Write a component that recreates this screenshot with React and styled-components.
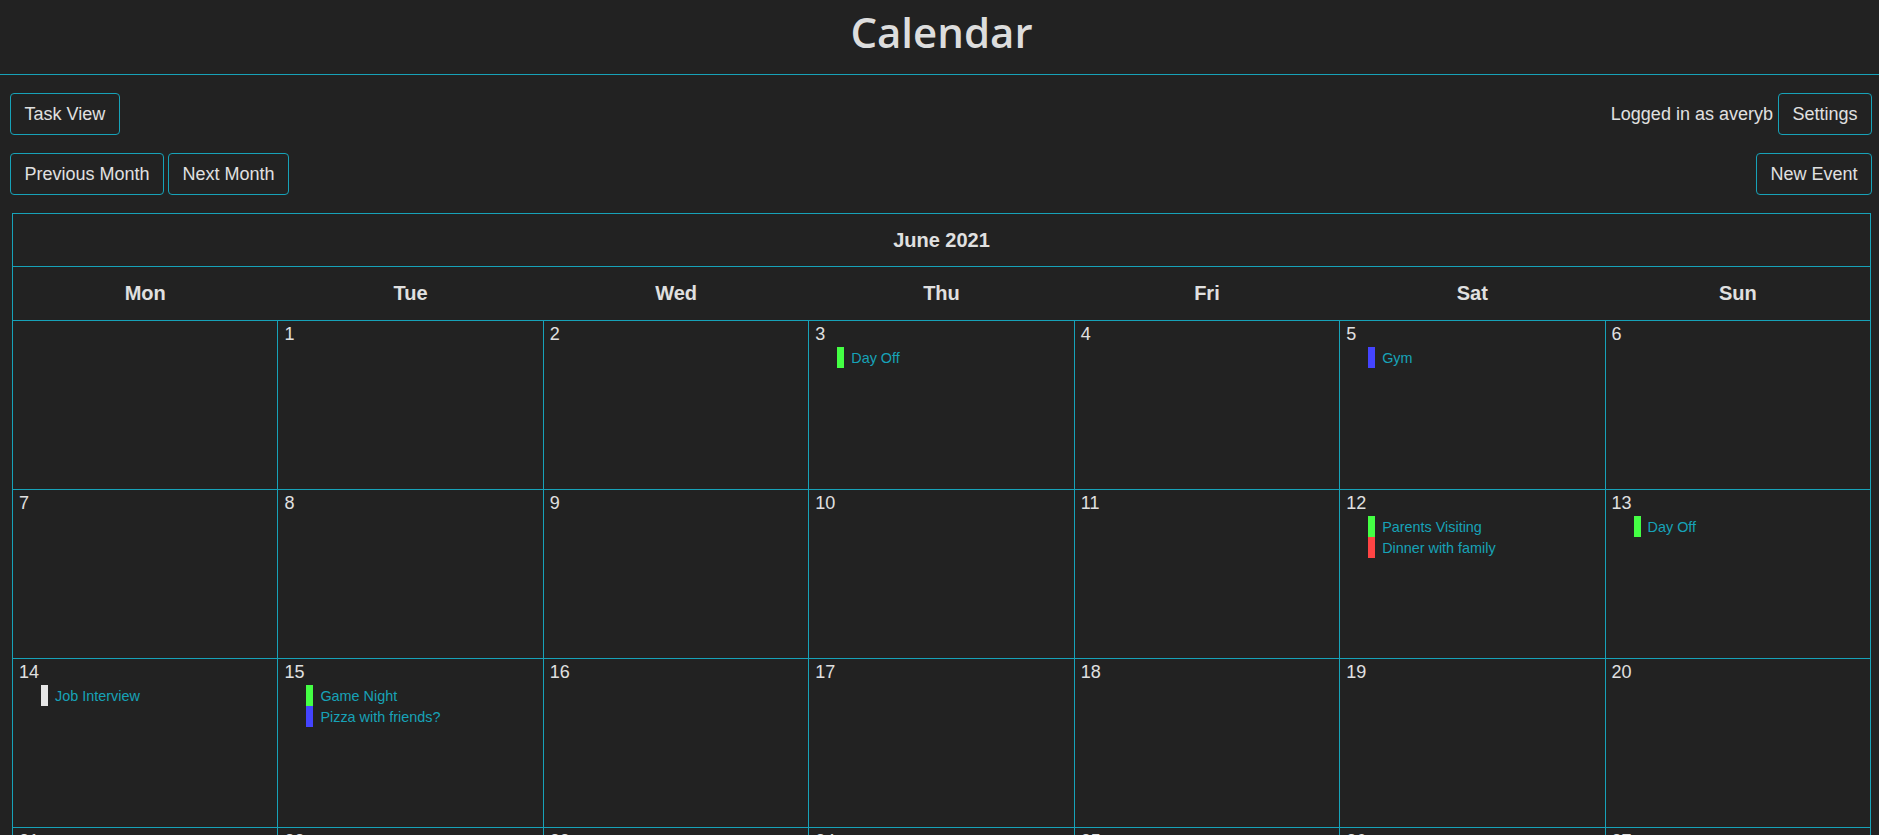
import React from 'react';
import styled, { createGlobalStyle } from 'styled-components';

const GlobalStyle = createGlobalStyle`
    body {
        margin: 0;
        background: #222222;
        color: #e0e0e0;
        font-family: "Liberation Sans", Arial, sans-serif;
        font-size: 18px;
    }
`

const Header = styled.header`
    border-bottom: 1px solid #17a2b8;
    height: 75px;
    box-sizing: border-box;
    text-align: center;
`

const Title = styled.h1`
    margin: 0;
    padding-left: 4px;
    font-family: "Open Sans", "Noto Sans", sans-serif;
    font-weight: 600;
    font-size: 42px;
    line-height: 64px;
    color: #dddddd;
`

const Page = styled.main`
    padding: 18px 7px 0 10px;
`

const Toolbar = styled.div`
    display: flex;
    justify-content: space-between;
    align-items: center;
    margin-bottom: 18px;
`

const Group = styled.div`
    display: flex;
    align-items: center;
    gap: ${props => props.gap || 4}px;
`

const Button = styled.button`
    font-family: inherit;
    font-size: 18px;
    line-height: 20px;
    padding: 10px 13.5px;
    color: #e0e0e0;
    background: transparent;
    border: 1px solid #17a2b8;
    border-radius: 4px;
    cursor: pointer;
`

const UserLabel = styled.span`
    font-size: 18px;
    color: #e0e0e0;
`

const Calendar = styled.section`
    margin: 0 1px 0 2px;
    border: 1px solid #17a2b8;
`

const MonthTitle = styled.div`
    padding: 15px;
    line-height: 22px;
    font-size: 20px;
    font-weight: bold;
    text-align: center;
    border-bottom: 1px solid #17a2b8;
`

const Grid = styled.div`
    display: grid;
    grid-template-columns: repeat(7, 1fr);
    gap: 1px;
    background: ${props => props.lined ? '#17a2b8' : '#222222'};
    border-top: ${props => props.lined ? '1px solid #17a2b8' : 'none'};
    grid-auto-rows: ${props => props.lined ? '168px' : 'auto'};
`

const DayName = styled.div`
    padding: 15px 0 16px;
    line-height: 22px;
    font-size: 20px;
    font-weight: bold;
    text-align: center;
    background: #222222;
`

const Cell = styled.div`
    background: #222222;
    padding: 3px 6px;
    min-width: 0;
`

const DateNum = styled.div`
    font-size: 18px;
    line-height: 21px;
    color: #e0e0e0;
`

const EventList = styled.ul`
    list-style: none;
    margin: 2px 0 0;
    padding-left: 22px;
`

const EventItem = styled.li`
    display: flex;
    align-items: center;
    gap: 7px;
    height: 21px;
    font-size: 14.4px;
    color: #17a2b8;
`

const Bar = styled.span`
    width: 7px;
    height: 21px;
    background: ${props => props.color};
    flex-shrink: 0;
`

const colors = {
    green: '#44ff44',
    blue: '#4444ff',
    red: '#ff4444',
    white: '#e6e6e6',
}

const events = {
    3: [{ name: 'Day Off', color: 'green' }],
    5: [{ name: 'Gym', color: 'blue' }],
    12: [
        { name: 'Parents Visiting', color: 'green' },
        { name: 'Dinner with family', color: 'red' },
    ],
    13: [{ name: 'Day Off', color: 'green' }],
    14: [{ name: 'Job Interview', color: 'white' }],
    15: [
        { name: 'Game Night', color: 'green' },
        { name: 'Pizza with friends?', color: 'blue' },
    ],
}

const dayNames = ['Mon', 'Tue', 'Wed', 'Thu', 'Fri', 'Sat', 'Sun']

// June 2021 starts on a Tuesday
const cells = [null]
for (let d = 1; d <= 30; d++) cells.push(d)
while (cells.length % 7 !== 0) cells.push(null)

export default function App() {
    return (
        <>
            <GlobalStyle />
            <Header>
                <Title>Calendar</Title>
            </Header>
            <Page>
                <Toolbar>
                    <Button>Task View</Button>
                    <Group gap={5}>
                        <UserLabel>Logged in as averyb</UserLabel>
                        <Button>Settings</Button>
                    </Group>
                </Toolbar>
                <Toolbar>
                    <Group gap={4}>
                        <Button>Previous Month</Button>
                        <Button>Next Month</Button>
                    </Group>
                    <Button>New Event</Button>
                </Toolbar>
                <Calendar>
                    <MonthTitle>June 2021</MonthTitle>
                    <Grid>
                        {dayNames.map(name => <DayName key={name}>{name}</DayName>)}
                    </Grid>
                    <Grid lined>
                        {cells.map((day, i) => (
                            <Cell key={i}>
                                {day && <DateNum>{day}</DateNum>}
                                {day && events[day] && (
                                    <EventList>
                                        {events[day].map(ev => (
                                            <EventItem key={ev.name}>
                                                <Bar color={colors[ev.color]} />
                                                {ev.name}
                                            </EventItem>
                                        ))}
                                    </EventList>
                                )}
                            </Cell>
                        ))}
                    </Grid>
                </Calendar>
            </Page>
        </>
    )
}
